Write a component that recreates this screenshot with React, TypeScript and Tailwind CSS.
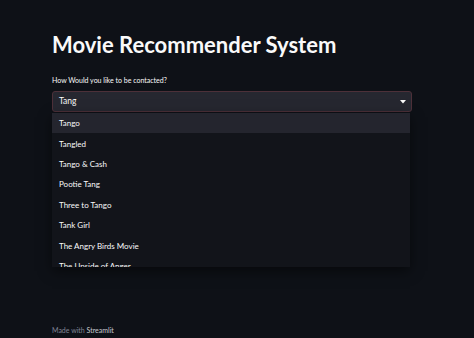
const movies = [
  "Tango",
  "Tangled",
  "Tango & Cash",
  "Pootie Tang",
  "Three to Tango",
  "Tank Girl",
  "The Angry Birds Movie",
  "The Upside of Anger",
];

export default function App() {
  return (
    <div className="w-[474px] h-[338px] bg-[#0e1117] text-[#fafafa] flex flex-col px-[52px] overflow-hidden font-['Lato',sans-serif]">
      <h1 className="mt-[30px] text-[22px] leading-[30px] font-bold">Movie Recommender System</h1>
      <label className="mt-[15px] text-[7px] leading-[10px]">How Would you like to be contacted?</label>
      <div className="relative mt-[6px]">
        <div className="h-[21px] w-[360px] rounded-[3px] border border-[#4d3039] bg-[#262730] flex items-center justify-between pl-[6px] pr-[5px]">
          <span className="text-[8.5px]">Tang</span>
          <svg width="6" height="4" viewBox="0 0 6 4">
            <path d="M0 0 L6 0 L3 3.5 Z" fill="#fafafa" />
          </svg>
        </div>
        <ul className="absolute left-0 top-[22px] w-[358px] h-[154px] overflow-hidden bg-[#12141a] shadow-[0_4px_12px_rgba(0,0,0,0.5)]">
          {movies.map((m, i) => (
            <li
              key={m}
              className={`h-[20.4px] flex items-center pl-[7px] text-[8px] ${i === 0 ? "bg-[#24252e]" : ""}`}
            >
              {m}
            </li>
          ))}
        </ul>
      </div>
      <div className="mt-auto mb-[3px] text-[7px] leading-[10px]">
        <span className="text-[#808495]">Made with </span>
        <span className="text-[#c8c9cf]">Streamlit</span>
      </div>
    </div>
  );
}
